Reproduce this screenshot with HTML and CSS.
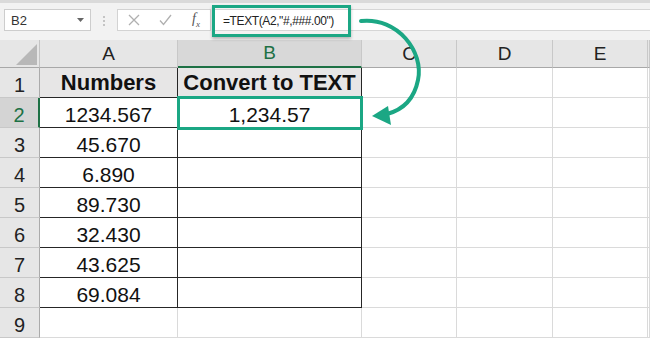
FILE: index.html
```html
<html>
<head>
  <title>TEXT function</title>
  <link rel="stylesheet" href="styles.css">
</head>
<body>
  <!-- formula bar -->
  <div class="toolbar">
    <div class="namebox">
      <span>B2</span>
      <svg class="caret" width="7" height="4"><path d="M0 0h7l-3.5 4z"/></svg>
    </div>
    <svg class="grip" width="26" height="22"><circle cx="13" cy="8" r="1"/><circle cx="13" cy="12" r="1"/><circle cx="13" cy="16" r="1"/></svg>
    <div class="fbtns">
      <svg class="btn" width="12" height="12"><path d="M1 1l10 10M11 1L1 11"/></svg>
      <svg class="btn" width="13" height="12"><path d="M1 6.5l3.5 4L12 1"/></svg>
      <span class="fx"><i>f</i><sub>x</sub></span>
    </div>
    <div class="formula">
      <span class="formula-text">=TEXT(A2,"#,###.00")</span>
      <span class="callout"></span>
    </div>
  </div>

  <!-- sheet -->
  <div class="sheet">
    <div class="corner"><svg width="40" height="27"><polygon points="37,4 37,25 16,25"/></svg></div>
    <div class="hd">A</div><div class="hd sel">B</div><div class="hd">C</div><div class="hd">D</div><div class="hd">E</div><div class="hd"></div>

    <div class="rh">1</div><div class="c t title">Numbers</div><div class="c t title">Convert to TEXT</div><div class="c"></div><div class="c"></div><div class="c"></div><div class="c"></div>
    <div class="rh sel">2</div><div class="c t">1234.567</div><div class="c t active">1,234.57<span class="ring"></span></div><div class="c"></div><div class="c"></div><div class="c"></div><div class="c"></div>
    <div class="rh">3</div><div class="c t">45.670</div><div class="c t"></div><div class="c"></div><div class="c"></div><div class="c"></div><div class="c"></div>
    <div class="rh">4</div><div class="c t">6.890</div><div class="c t"></div><div class="c"></div><div class="c"></div><div class="c"></div><div class="c"></div>
    <div class="rh">5</div><div class="c t">89.730</div><div class="c t"></div><div class="c"></div><div class="c"></div><div class="c"></div><div class="c"></div>
    <div class="rh">6</div><div class="c t">32.430</div><div class="c t"></div><div class="c"></div><div class="c"></div><div class="c"></div><div class="c"></div>
    <div class="rh">7</div><div class="c t">43.625</div><div class="c t"></div><div class="c"></div><div class="c"></div><div class="c"></div><div class="c"></div>
    <div class="rh">8</div><div class="c t">69.084</div><div class="c t"></div><div class="c"></div><div class="c"></div><div class="c"></div><div class="c"></div>
    <div class="rh">9</div><div class="c"></div><div class="c"></div><div class="c"></div><div class="c"></div><div class="c"></div><div class="c"></div>
  </div>

  <!-- arrow from formula to result -->
  <svg class="arrow" width="650" height="339">
    <path d="M361 21C398 17 424 52 418 80C414 100 402 110 387 114"/>
    <polygon points="372,116 388,106 391,125"/>
  </svg>
</body>
</html>
```

FILE: styles.css
```css
body {
  margin: 0;
  width: 650px;
  height: 339px;
  overflow: hidden;
  position: relative;
  background: #fff;
  font-family: "Liberation Sans", Arial, sans-serif;
  color: #111;
}

/* formula bar */
.toolbar {
  height: 40px;
  box-sizing: border-box;
  display: flex;
  align-items: flex-start;
  padding: 6px 0 0 4px;
  background: #f2f2f2;
  border-top: 3px solid #dadada;
}
.namebox {
  width: 87px;
  height: 22px;
  box-sizing: border-box;
  display: flex;
  align-items: center;
  justify-content: space-between;
  padding: 0 6px 0 6px;
  background: #fff;
  border: 1px solid #cdcdcd;
  font-size: 13px;
  color: #333;
}
.caret {
  fill: #666;
}
.grip {
  fill: #b5b5b5;
}
.fbtns {
  width: 94px;
  height: 22px;
  box-sizing: border-box;
  display: flex;
  align-items: center;
  padding-left: 10px;
  gap: 19px;
  background: #fff;
  border: 1px solid #d3d3d3;
}
.btn {
  fill: none;
  stroke: #b0b0b0;
  stroke-width: 1.3;
}
.fx {
  font-family: "Liberation Serif", serif;
  font-size: 14px;
  color: #555;
  margin-left: 1px;
}
.fx sub {
  font-size: 9px;
  font-style: italic;
}
.formula {
  flex: 1;
  position: relative;
  height: 22px;
  margin-left: 1px;
  box-sizing: border-box;
  background: #fff;
  border-top: 1px solid #d6d6d6;
  border-bottom: 1px solid #d6d6d6;
}
.formula-text {
  display: block;
  padding: 2px 0 0 11px;
  font-size: 12px;
  letter-spacing: -0.4px;
  line-height: 18px;
  color: #222;
}
.callout {
  position: absolute;
  left: 0;
  top: -5px;
  width: 139px;
  height: 32px;
  box-sizing: border-box;
  border: 3px solid #1ba784;
  box-shadow: 0 2px 3px rgba(0, 0, 0, .25);
}

/* grid */
.sheet {
  display: grid;
  grid-template-columns: 40px 138px 184px 95px 96px 95px 1fr;
  grid-template-rows: 28px repeat(9, 30px);
}
.sheet > div {
  box-sizing: border-box;
}
.corner {
  background: #e6e6e6;
  border-right: 1px solid #c4c4c4;
  border-bottom: 1px solid #a8a8a8;
}
.corner svg {
  display: block;
  fill: #b8b8b8;
}
.hd {
  display: flex;
  align-items: center;
  justify-content: center;
  background: #e6e6e6;
  border-right: 1px solid #c8c8c8;
  border-bottom: 1px solid #a8a8a8;
  font-size: 19px;
  color: #222;
}
.hd.sel {
  background: #d8d8d8;
  color: #1e7145;
  border-bottom: 2px solid #1e7145;
}
.rh {
  display: flex;
  align-items: flex-end;
  justify-content: center;
  background: #e6e6e6;
  border-right: 1px solid #ababab;
  border-bottom: 1px solid #c8c8c8;
  font-size: 20px;
  color: #222;
}
.rh.sel {
  background: #d4d4d4;
  color: #1e7145;
  border-right: 2px solid #1e7145;
}
.c {
  display: flex;
  align-items: flex-end;
  justify-content: center;
  border-right: 1px solid #dadada;
  border-bottom: 1px solid #dadada;
  font-size: 21px;
  color: #111;
}
.c.t {
  border-right-color: #262626;
  border-bottom-color: #262626;
}
.c.title {
  background: #e7e6e6;
  font-weight: bold;
  font-size: 22px;
  padding-bottom: 1px;
}
.active {
  position: relative;
}
.ring {
  position: absolute;
  left: -1px;
  top: -2px;
  right: -2px;
  bottom: -3px;
  border: 3px solid #1ba784;
}

/* annotation arrow */
.arrow {
  position: absolute;
  left: 0;
  top: 0;
  pointer-events: none;
}
.arrow path {
  fill: none;
  stroke: #1ba784;
  stroke-width: 4;
  stroke-linecap: round;
}
.arrow polygon {
  fill: #1ba784;
}
```
